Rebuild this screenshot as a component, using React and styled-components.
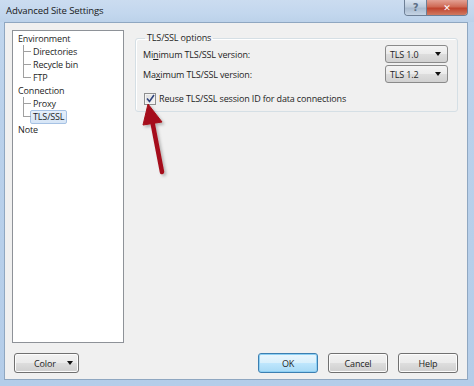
import { createGlobalStyle, styled } from 'styled-components';

const GlobalStyle = createGlobalStyle`
  html, body {
    margin: 0;
    padding: 0;
  }
  body {
    width: 474px;
    height: 386px;
    overflow: hidden;
    font-family: 'Open Sans', 'Noto Sans', sans-serif;
    font-size: 9px;
    letter-spacing: -0.15px;
    color: #1e1e1e;
    background: #b9d1ea;
  }
`;

const treeItems = [
  { label: 'Environment' },
  { label: 'Directories', child: true },
  { label: 'Recycle bin', child: true },
  { label: 'FTP', child: true, last: true },
  { label: 'Connection' },
  { label: 'Proxy', child: true },
  { label: 'TLS/SSL', child: true, last: true, selected: true },
  { label: 'Note' },
];

function App() {
  return (
    <>
      <GlobalStyle />
      <StyledWindow>
        <StyledTitleBar>
          <StyledTitle>Advanced Site Settings</StyledTitle>
          <StyledCaptionButtons>
            <StyledCaptionButton>?</StyledCaptionButton>
            <StyledCaptionButton $close>✕</StyledCaptionButton>
          </StyledCaptionButtons>
        </StyledTitleBar>

        <StyledClient>
          <StyledMain>
            <StyledTree>
              {treeItems.map(item => (
                <StyledTreeRow key={item.label} $child={item.child} $last={item.last}>
                  <StyledTreeLabel $selected={item.selected}>{item.label}</StyledTreeLabel>
                </StyledTreeRow>
              ))}
            </StyledTree>

            <StyledPanel>
              <StyledGroup>
                <StyledLegend>TLS/SSL options</StyledLegend>
                <StyledOptionRow>
                  <span>
                    Mi<u>n</u>imum TLS/SSL version:
                  </span>
                  <StyledCombo>
                    <span>TLS 1.0</span>
                    <StyledArrowDown />
                  </StyledCombo>
                </StyledOptionRow>
                <StyledOptionRow>
                  <span>
                    Ma<u>x</u>imum TLS/SSL version:
                  </span>
                  <StyledCombo>
                    <span>TLS 1.2</span>
                    <StyledArrowDown />
                  </StyledCombo>
                </StyledOptionRow>
                <StyledCheckRow>
                  <StyledCheckbox>
                    <svg width="9" height="9" viewBox="0 0 9 9">
                      <path d="M1 4.5 L3.5 7.5 L8 1" fill="none" stroke="#31457e" strokeWidth="1.6" />
                    </svg>
                  </StyledCheckbox>
                  <span>Reuse TLS/SSL session ID for data connections</span>
                </StyledCheckRow>
              </StyledGroup>
            </StyledPanel>
          </StyledMain>

          <StyledFooter>
            <StyledButton $width={65} $menu>
              <span>Color</span>
              <StyledArrowDown />
            </StyledButton>
            <StyledFooterRight>
              <StyledButton $width={60} $default>
                OK
              </StyledButton>
              <StyledButton $width={60}>Cancel</StyledButton>
              <StyledButton $width={60}>Help</StyledButton>
            </StyledFooterRight>
          </StyledFooter>
        </StyledClient>

        <StyledAnnotation width="474" height="386" viewBox="0 0 474 386">
          <defs>
            <filter id="arrowShadow" x="-50%" y="-50%" width="200%" height="200%">
              <feDropShadow dx="2" dy="2" stdDeviation="1.5" floodColor="#000" floodOpacity="0.25" />
            </filter>
          </defs>
          <g filter="url(#arrowShadow)" fill="#a50f1a" stroke="#a50f1a">
            <line x1="162" y1="172" x2="152" y2="120" strokeWidth="4.5" strokeLinecap="round" />
            <polygon points="148,104 162,122 143,125" strokeWidth="1" strokeLinejoin="round" />
          </g>
        </StyledAnnotation>
      </StyledWindow>
    </>
  );
}

export default App;

const StyledWindow = styled.div`
  position: relative;
  width: 474px;
  height: 386px;
  display: flex;
  flex-direction: column;
  background: linear-gradient(180deg, #c2d7ee 0%, #bad1eb 30%, #b4cde9 100%);
`;

const StyledTitleBar = styled.div`
  height: 22px;
  display: flex;
  align-items: flex-start;
  padding: 0 6px 0 6px;
  background: linear-gradient(180deg, #cbdcf0 0%, #c3d7ee 60%, #bcd2ea 100%);
`;

const StyledTitle = styled.div`
  line-height: 22px;
  font-size: 9.6px;
  color: #1a1a1a;
`;

const StyledCaptionButtons = styled.div`
  margin-left: auto;
  display: flex;
  border: 1px solid #6d7f96;
  border-top: none;
  border-radius: 0 0 4px 4px;
  overflow: hidden;
`;

const StyledCaptionButton = styled.div`
  width: ${({ $close }) => ($close ? '40px' : '21px')};
  height: 15px;
  display: flex;
  align-items: center;
  justify-content: center;
  font-family: 'DejaVu Sans', sans-serif;
  font-size: ${({ $close }) => ($close ? '9px' : '10px')};
  font-weight: bold;
  color: ${({ $close }) => ($close ? '#fff' : '#5d6f86')};
  background: ${({ $close }) =>
    $close
      ? 'linear-gradient(180deg, #e3a194 0%, #cf6a55 45%, #c0442e 55%, #d07a62 100%)'
      : 'linear-gradient(180deg, #d8e4f1 0%, #bccbdc 45%, #a9bbd0 55%, #c5d4e4 100%)'};
  border-left: ${({ $close }) => ($close ? '1px solid #6d7f96' : 'none')};
`;

const StyledClient = styled.div`
  flex: 1;
  margin: 0 6px 6px 4px;
  display: flex;
  flex-direction: column;
  padding: 7px 9px 6px 7px;
  background: #f0f0f0;
  border: 1px solid #8fa7c1;
`;

const StyledMain = styled.div`
  display: flex;
  gap: 11px;
  height: 313px;
`;

const StyledTree = styled.div`
  width: 112px;
  box-sizing: border-box;
  border: 1px solid #8e9298;
  background: #fff;
  padding: 1px 0 0 4px;
`;

const StyledTreeRow = styled.div`
  position: relative;
  height: 13px;
  line-height: 13px;
  padding-left: ${({ $child }) => ($child ? '15px' : '0')};

  ${({ $child, $last }) =>
    $child &&
    `
    &::before {
      content: '';
      position: absolute;
      left: 6px;
      top: 6px;
      width: 8px;
      height: 1px;
      background: #a0a0a0;
    }
    &::after {
      content: '';
      position: absolute;
      left: 6px;
      top: 0;
      width: 1px;
      height: ${$last ? '7px' : '13px'};
      background: #a0a0a0;
    }
  `}
`;

const StyledTreeLabel = styled.span`
  display: inline-block;
  padding: 0 2px;
  margin-left: -2px;
  line-height: 12px;
  border: 1px solid ${({ $selected }) => ($selected ? '#a6c2e4' : 'transparent')};
  border-radius: 2px;
  background: ${({ $selected }) => ($selected ? 'linear-gradient(180deg, #e6effa 0%, #d6e5f6 100%)' : 'transparent')};
`;

const StyledPanel = styled.div`
  flex: 1;
  display: flex;
  flex-direction: column;
`;

const StyledGroup = styled.fieldset`
  margin: 2px 0 0 0;
  padding: 1px 9px 6px 7px;
  border: 1px solid #d5dfe5;
  border-radius: 3px;
  box-shadow: inset 1px 1px 0 #fff;
  display: flex;
  flex-direction: column;
  gap: 2px;
`;

const StyledLegend = styled.legend`
  padding: 0 2px;
  margin-left: 2px;
  line-height: 12px;
`;

const StyledOptionRow = styled.div`
  display: flex;
  align-items: center;
  justify-content: space-between;
  height: 18px;
`;

const StyledCombo = styled.div`
  width: 63px;
  height: 18px;
  box-sizing: border-box;
  display: flex;
  align-items: center;
  justify-content: space-between;
  padding: 0 6px 0 4px;
  border: 1px solid #8a8a8a;
  border-radius: 3px;
  background: linear-gradient(180deg, #f4f4f4 0%, #ebebeb 48%, #dddddd 52%, #d1d1d1 100%);
`;

const StyledArrowDown = styled.span`
  width: 0;
  height: 0;
  border-left: 3.5px solid transparent;
  border-right: 3.5px solid transparent;
  border-top: 4px solid #111;
`;

const StyledCheckRow = styled.div`
  display: flex;
  align-items: center;
  gap: 3px;
  margin-top: 7px;
  padding-left: 1px;
  height: 13px;
`;

const StyledCheckbox = styled.span`
  width: 12px;
  height: 12px;
  box-sizing: border-box;
  display: flex;
  align-items: center;
  justify-content: center;
  border: 1px solid #8e8f8f;
  background: linear-gradient(135deg, #dcdcdc 0%, #f6f6f6 100%);
  box-shadow: inset 0 0 0 1px #f4f4f4;
`;

const StyledFooter = styled.div`
  margin-top: auto;
  display: flex;
  align-items: center;
  padding-left: 2px;
`;

const StyledFooterRight = styled.div`
  margin-left: auto;
  display: flex;
  gap: 10px;
`;

const StyledButton = styled.div`
  width: ${({ $width }) => $width}px;
  height: 20px;
  box-sizing: border-box;
  display: flex;
  align-items: center;
  justify-content: ${({ $menu }) => ($menu ? 'space-between' : 'center')};
  padding: ${({ $menu }) => ($menu ? '0 5px 0 19px' : '0')};
  border: 1px solid ${({ $default }) => ($default ? '#3c7fb1' : '#707070')};
  border-radius: 3px;
  background: ${({ $default }) =>
    $default
      ? 'linear-gradient(180deg, #eaf6fd 0%, #d9f0fc 48%, #bee6fd 52%, #a7d9f5 100%)'
      : 'linear-gradient(180deg, #f2f2f2 0%, #ebebeb 48%, #dddddd 52%, #cfcfcf 100%)'};
  box-shadow: ${({ $default }) => ($default ? 'inset 0 0 0 1px #8ed0f4' : 'inset 0 0 0 1px #fcfcfc')};
`;

const StyledAnnotation = styled.svg`
  position: absolute;
  left: 0;
  top: 0;
  pointer-events: none;
`;
